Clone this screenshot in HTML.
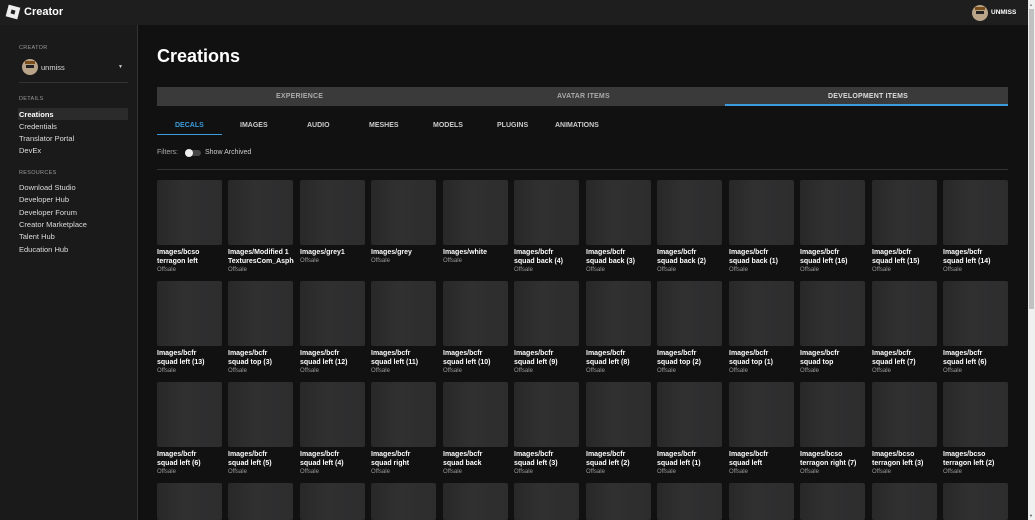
<!DOCTYPE html>
<html style="width:1035px;height:520px;overflow:hidden"><head><meta charset="utf-8"><style>
*{margin:0;padding:0;box-sizing:border-box}
body{width:1035px;height:520px;overflow:hidden;background:#111112;font-family:"Liberation Sans",sans-serif;color:#fff;position:relative}
.top{position:absolute;left:0;top:0;width:1028px;height:25px;background:#1e1e1f}
.logo{position:absolute;left:7px;top:6px;width:12px;height:12px;background:#eee;transform:rotate(15deg)}
.logo:after{content:"";position:absolute;left:4px;top:4px;width:4px;height:4px;background:#1e1e1f}
.brand{position:absolute;left:24px;top:6px;font-size:11px;font-weight:bold}
.av{position:absolute;width:16px;height:16px;border-radius:50%;background:#b9a48a;overflow:hidden}
.av:before{content:"";position:absolute;left:4px;top:6px;width:8px;height:3px;background:#222}
.av:after{content:"";position:absolute;left:3px;top:2px;width:10px;height:3px;background:#7a4f1c}
.side{position:absolute;left:0;top:25px;width:138px;height:495px;background:#1a1a1b;border-right:1px solid #333}
.sh{position:absolute;left:19px;font-size:5.5px;color:#999;letter-spacing:.3px}
.sl{position:absolute;left:19px;font-size:7.5px;color:#ddd}
.sel{position:absolute;left:18px;top:108px;width:110px;height:12px;background:#2b2b2c}
h1{position:absolute;left:157px;top:46px;font-size:18px;font-weight:bold}
.tabs{position:absolute;left:157px;top:87px;width:851px;height:19px;background:#3a3a3b}
.tabs span{position:absolute;top:6px;font-size:7px;font-weight:bold;color:#aaa;letter-spacing:.2px}
.ul{position:absolute;left:568px;top:17px;width:283px;height:2px;background:#3b9ddd}
.st{position:absolute;top:122px;font-size:7px;font-weight:bold;color:#ccc}
.line{position:absolute;left:157px;top:169px;width:851px;height:1px;background:#333}
.c{position:absolute;width:66px}
.c .i{width:65px;height:65px;background:linear-gradient(90deg,#282829,#303031 40%,#2d2d2e);border-radius:2px}
.c .t{font-size:7px;font-weight:bold;line-height:9px;margin-top:3px;white-space:nowrap;overflow:hidden;width:66px}
.c .o{font-size:6px;color:#999;margin-top:1px}
.clip{position:absolute;left:0;top:0;width:1035px;height:520px;overflow:hidden}
</style></head><body><div class="clip">
<div class="top"><div class="logo"></div><div class="brand">Creator</div>
<div class="av" style="left:972px;top:5px"></div><div style="position:absolute;left:991px;top:9px;font-size:6.5px;font-weight:bold">UNMISS</div></div>
<div style="position:absolute;left:1028px;top:0;width:7px;height:520px;background:#f0f0f0"></div>
<div style="position:absolute;left:1029px;top:9px;width:5px;height:300px;background:#c1c1c1"></div>
<div style="position:absolute;left:1029px;top:2px;font-size:4px;color:#888">▲</div>
<div style="position:absolute;left:1029px;top:513px;font-size:4px;color:#555">▼</div>
<div class="side"></div>
<div class="sh" style="top:45px">CREATOR</div>
<div class="av" style="left:22px;top:59px"></div>
<div class="sl" style="left:41px;top:63px">unmiss</div><div style="position:absolute;left:118px;top:64px;font-size:5px;color:#ccc">▼</div>
<div style="position:absolute;left:19px;top:82px;width:109px;height:1px;background:#333"></div>
<div class="sh" style="top:96px">DETAILS</div>
<div class="sel"></div>
<div class="sl" style="top:110px;font-weight:bold;color:#fff">Creations</div>
<div class="sl" style="top:122px">Credentials</div>
<div class="sl" style="top:134px">Translator Portal</div>
<div class="sl" style="top:146px">DevEx</div>
<div class="sh" style="top:170px">RESOURCES</div>
<div class="sl" style="top:183px">Download Studio</div>
<div class="sl" style="top:195px">Developer Hub</div>
<div class="sl" style="top:208px">Developer Forum</div>
<div class="sl" style="top:220px">Creator Marketplace</div>
<div class="sl" style="top:232px">Talent Hub</div>
<div class="sl" style="top:245px">Education Hub</div>
<h1>Creations</h1>
<div class="tabs"><span style="left:119px">EXPERIENCE</span><span style="left:400px">AVATAR ITEMS</span><span style="left:671px;color:#ddd">DEVELOPMENT ITEMS</span><div class="ul"></div></div>
<div class="st" style="left:175px;color:#3b9ddd">DECALS</div>
<div style="position:absolute;left:157px;top:134px;width:65px;height:1px;background:#3b9ddd"></div>
<div class="st" style="left:240px">IMAGES</div><div class="st" style="left:307px">AUDIO</div><div class="st" style="left:369px">MESHES</div><div class="st" style="left:433px">MODELS</div><div class="st" style="left:497px">PLUGINS</div><div class="st" style="left:555px">ANIMATIONS</div>
<div style="position:absolute;left:157px;top:149px;font-size:7px;color:#aaa">Filters:</div>
<div style="position:absolute;left:185px;top:150px;width:16px;height:6px;border-radius:3px;background:#444"></div>
<div style="position:absolute;left:185px;top:149px;width:8px;height:8px;border-radius:50%;background:#eee"></div>
<div style="position:absolute;left:205px;top:149px;font-size:7px;color:#ccc">Show Archived</div>
<div class="line"></div>

<div class="c" style="left:157px;top:180px"><div class="i"></div><div class="t">Images/bcso<br>terragon left</div><div class="o">Offsale</div></div>
<div class="c" style="left:228px;top:180px"><div class="i"></div><div class="t">Images/Modified 1<br>TexturesCom_Asphalt</div><div class="o">Offsale</div></div>
<div class="c" style="left:300px;top:180px"><div class="i"></div><div class="t">Images/grey1</div><div class="o">Offsale</div></div>
<div class="c" style="left:371px;top:180px"><div class="i"></div><div class="t">Images/grey</div><div class="o">Offsale</div></div>
<div class="c" style="left:443px;top:180px"><div class="i"></div><div class="t">Images/white</div><div class="o">Offsale</div></div>
<div class="c" style="left:514px;top:180px"><div class="i"></div><div class="t">Images/bcfr<br>squad back (4)</div><div class="o">Offsale</div></div>
<div class="c" style="left:586px;top:180px"><div class="i"></div><div class="t">Images/bcfr<br>squad back (3)</div><div class="o">Offsale</div></div>
<div class="c" style="left:657px;top:180px"><div class="i"></div><div class="t">Images/bcfr<br>squad back (2)</div><div class="o">Offsale</div></div>
<div class="c" style="left:729px;top:180px"><div class="i"></div><div class="t">Images/bcfr<br>squad back (1)</div><div class="o">Offsale</div></div>
<div class="c" style="left:800px;top:180px"><div class="i"></div><div class="t">Images/bcfr<br>squad left (16)</div><div class="o">Offsale</div></div>
<div class="c" style="left:872px;top:180px"><div class="i"></div><div class="t">Images/bcfr<br>squad left (15)</div><div class="o">Offsale</div></div>
<div class="c" style="left:943px;top:180px"><div class="i"></div><div class="t">Images/bcfr<br>squad left (14)</div><div class="o">Offsale</div></div>

<div class="c" style="left:157px;top:281px"><div class="i"></div><div class="t">Images/bcfr<br>squad left (13)</div><div class="o">Offsale</div></div>
<div class="c" style="left:228px;top:281px"><div class="i"></div><div class="t">Images/bcfr<br>squad top (3)</div><div class="o">Offsale</div></div>
<div class="c" style="left:300px;top:281px"><div class="i"></div><div class="t">Images/bcfr<br>squad left (12)</div><div class="o">Offsale</div></div>
<div class="c" style="left:371px;top:281px"><div class="i"></div><div class="t">Images/bcfr<br>squad left (11)</div><div class="o">Offsale</div></div>
<div class="c" style="left:443px;top:281px"><div class="i"></div><div class="t">Images/bcfr<br>squad left (10)</div><div class="o">Offsale</div></div>
<div class="c" style="left:514px;top:281px"><div class="i"></div><div class="t">Images/bcfr<br>squad left (9)</div><div class="o">Offsale</div></div>
<div class="c" style="left:586px;top:281px"><div class="i"></div><div class="t">Images/bcfr<br>squad left (8)</div><div class="o">Offsale</div></div>
<div class="c" style="left:657px;top:281px"><div class="i"></div><div class="t">Images/bcfr<br>squad top (2)</div><div class="o">Offsale</div></div>
<div class="c" style="left:729px;top:281px"><div class="i"></div><div class="t">Images/bcfr<br>squad top (1)</div><div class="o">Offsale</div></div>
<div class="c" style="left:800px;top:281px"><div class="i"></div><div class="t">Images/bcfr<br>squad top</div><div class="o">Offsale</div></div>
<div class="c" style="left:872px;top:281px"><div class="i"></div><div class="t">Images/bcfr<br>squad left (7)</div><div class="o">Offsale</div></div>
<div class="c" style="left:943px;top:281px"><div class="i"></div><div class="t">Images/bcfr<br>squad left (6)</div><div class="o">Offsale</div></div>

<div class="c" style="left:157px;top:382px"><div class="i"></div><div class="t">Images/bcfr<br>squad left (6)</div><div class="o">Offsale</div></div>
<div class="c" style="left:228px;top:382px"><div class="i"></div><div class="t">Images/bcfr<br>squad left (5)</div><div class="o">Offsale</div></div>
<div class="c" style="left:300px;top:382px"><div class="i"></div><div class="t">Images/bcfr<br>squad left (4)</div><div class="o">Offsale</div></div>
<div class="c" style="left:371px;top:382px"><div class="i"></div><div class="t">Images/bcfr<br>squad right</div><div class="o">Offsale</div></div>
<div class="c" style="left:443px;top:382px"><div class="i"></div><div class="t">Images/bcfr<br>squad back</div><div class="o">Offsale</div></div>
<div class="c" style="left:514px;top:382px"><div class="i"></div><div class="t">Images/bcfr<br>squad left (3)</div><div class="o">Offsale</div></div>
<div class="c" style="left:586px;top:382px"><div class="i"></div><div class="t">Images/bcfr<br>squad left (2)</div><div class="o">Offsale</div></div>
<div class="c" style="left:657px;top:382px"><div class="i"></div><div class="t">Images/bcfr<br>squad left (1)</div><div class="o">Offsale</div></div>
<div class="c" style="left:729px;top:382px"><div class="i"></div><div class="t">Images/bcfr<br>squad left</div><div class="o">Offsale</div></div>
<div class="c" style="left:800px;top:382px"><div class="i"></div><div class="t">Images/bcso<br>terragon right (7)</div><div class="o">Offsale</div></div>
<div class="c" style="left:872px;top:382px"><div class="i"></div><div class="t">Images/bcso<br>terragon left (3)</div><div class="o">Offsale</div></div>
<div class="c" style="left:943px;top:382px"><div class="i"></div><div class="t">Images/bcso<br>terragon left (2)</div><div class="o">Offsale</div></div>

<div class="c" style="left:157px;top:483px"><div class="i" style="height:37px"></div></div>
<div class="c" style="left:228px;top:483px"><div class="i" style="height:37px"></div></div>
<div class="c" style="left:300px;top:483px"><div class="i" style="height:37px"></div></div>
<div class="c" style="left:371px;top:483px"><div class="i" style="height:37px"></div></div>
<div class="c" style="left:443px;top:483px"><div class="i" style="height:37px"></div></div>
<div class="c" style="left:514px;top:483px"><div class="i" style="height:37px"></div></div>
<div class="c" style="left:586px;top:483px"><div class="i" style="height:37px"></div></div>
<div class="c" style="left:657px;top:483px"><div class="i" style="height:37px"></div></div>
<div class="c" style="left:729px;top:483px"><div class="i" style="height:37px"></div></div>
<div class="c" style="left:800px;top:483px"><div class="i" style="height:37px"></div></div>
<div class="c" style="left:872px;top:483px"><div class="i" style="height:37px"></div></div>
<div class="c" style="left:943px;top:483px"><div class="i" style="height:37px"></div></div>
</div></body></html>
